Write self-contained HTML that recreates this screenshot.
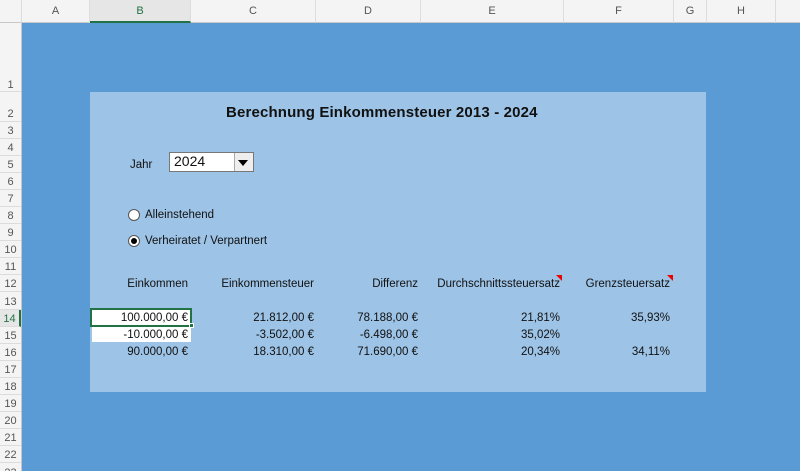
<!DOCTYPE html>
<html><head><meta charset="utf-8"><style>
*{margin:0;padding:0;box-sizing:border-box}
body{width:800px;height:471px;overflow:hidden;background:#5b9bd5;font-family:"Liberation Sans",sans-serif;position:relative;color:#111}
.a{position:absolute;white-space:nowrap}
#colh{position:absolute;left:0;top:0;width:800px;height:23px;background:#f4f4f4;border-bottom:1px solid #c8c8c8}
#rowh{position:absolute;left:0;top:23px;width:22px;height:448px;background:#f4f4f4;border-right:1px solid #c8c8c8;overflow:hidden}
.ch{position:absolute;top:0;height:23px;line-height:23px;text-align:center;font-size:11px;color:#555;border-right:1px solid #dcdcdc}
.rh{position:absolute;left:0;width:21px;text-align:center;font-size:11px;color:#555;border-bottom:1px solid #dcdcdc}
#panel{position:absolute;left:90px;top:92px;width:616px;height:300px;background:#9dc3e6}
.t{font-size:11.5px;position:absolute;white-space:nowrap;line-height:14px}
.r{text-align:right}
.tri{position:absolute;width:0;height:0;border-top:6px solid #e00;border-left:6px solid transparent}
</style></head><body>
<div id="colh">
<div style="position:absolute;left:0;top:0;width:22px;height:23px;border-right:1px solid #dcdcdc"></div>
<div class="ch" style="left:22px;width:68px">A</div>
<div class="ch" style="left:90px;width:101px;color:#217346;background:#e6e6e6;border-bottom:2px solid #217346">B</div>
<div class="ch" style="left:191px;width:125px">C</div>
<div class="ch" style="left:316px;width:105px">D</div>
<div class="ch" style="left:421px;width:143px">E</div>
<div class="ch" style="left:564px;width:110px">F</div>
<div class="ch" style="left:674px;width:33px">G</div>
<div class="ch" style="left:707px;width:69px">H</div>
</div>
<div id="rowh">
<div class="rh" style="top:0;height:69px;line-height:124px">1</div>
<div class="rh" style="top:69px;height:29.5px;line-height:44px">2</div>
<div class="rh" style="top:98.5px;height:17.1px;line-height:19px">3</div>
<div class="rh" style="top:115.6px;height:17.1px;line-height:19px">4</div>
<div class="rh" style="top:132.7px;height:17.1px;line-height:19px">5</div>
<div class="rh" style="top:149.8px;height:17.1px;line-height:19px">6</div>
<div class="rh" style="top:166.9px;height:17.1px;line-height:19px">7</div>
<div class="rh" style="top:184px;height:17.1px;line-height:19px">8</div>
<div class="rh" style="top:201.1px;height:17.1px;line-height:19px">9</div>
<div class="rh" style="top:218.2px;height:17.1px;line-height:19px">10</div>
<div class="rh" style="top:235.3px;height:17.1px;line-height:19px">11</div>
<div class="rh" style="top:252.4px;height:17.1px;line-height:19px">12</div>
<div class="rh" style="top:269.5px;height:17.1px;line-height:19px">13</div>
<div class="rh" style="top:286.6px;height:17.1px;line-height:19px;color:#217346;background:#e6e6e6;border-right:2px solid #217346">14</div>
<div class="rh" style="top:303.7px;height:17.1px;line-height:19px">15</div>
<div class="rh" style="top:320.8px;height:17.1px;line-height:19px">16</div>
<div class="rh" style="top:337.9px;height:17.1px;line-height:19px">17</div>
<div class="rh" style="top:355px;height:17.1px;line-height:19px">18</div>
<div class="rh" style="top:372.1px;height:17.1px;line-height:19px">19</div>
<div class="rh" style="top:389.2px;height:17.1px;line-height:19px">20</div>
<div class="rh" style="top:406.3px;height:17.1px;line-height:19px">21</div>
<div class="rh" style="top:423.4px;height:17.1px;line-height:19px">22</div>
<div class="rh" style="top:440.5px;height:17.1px;line-height:19px">23</div>
</div>
<div id="panel"></div>
<div class="a" style="left:226px;top:104px;font-size:15px;font-weight:bold;letter-spacing:0.15px">Berechnung Einkommensteuer 2013 - 2024</div>
<div class="t" style="left:130px;top:158px">Jahr</div>
<div class="a" style="left:169px;top:152px;width:85px;height:20px;background:#fff;border:1px solid #777"></div>
<div class="a" style="left:174px;top:153px;font-size:14px">2024</div>
<div class="a" style="left:234px;top:153px;width:19px;height:18px;background:#eee;border-left:1px solid #aaa"></div>
<div class="a" style="left:238px;top:160px;width:0;height:0;border-left:5px solid transparent;border-right:5px solid transparent;border-top:6px solid #000"></div>
<div class="a" style="left:128px;top:209px;width:12px;height:12px;border-radius:50%;background:#fff;border:1px solid #555"></div>
<div class="t" style="left:145px;top:208px">Alleinstehend</div>
<div class="a" style="left:128px;top:235px;width:12px;height:12px;border-radius:50%;background:#fff;border:1px solid #555"></div>
<div class="a" style="left:131px;top:238px;width:6px;height:6px;border-radius:50%;background:#000"></div>
<div class="t" style="left:145px;top:234px">Verheiratet / Verpartnert</div>
<div class="t r" style="right:612px;top:277px">Einkommen</div>
<div class="t r" style="right:486px;top:277px">Einkommensteuer</div>
<div class="t r" style="right:382px;top:277px">Differenz</div>
<div class="t r" style="right:240px;top:277px">Durchschnittssteuersatz</div>
<div class="tri" style="left:556px;top:275px"></div>
<div class="t r" style="right:130px;top:277px">Grenzsteuersatz</div>
<div class="tri" style="left:667px;top:275px"></div>
<div class="a" style="left:92px;top:326px;width:99px;height:16px;background:#fff"></div>
<div class="a" style="left:90px;top:308px;width:102px;height:19px;background:#fff;border:2px solid #217346"></div>
<div class="a" style="left:189px;top:323px;width:5px;height:5px;background:#217346;border:1px solid #fff"></div>
<div class="t r" style="right:612px;top:311px">100.000,00 €</div>
<div class="t r" style="right:612px;top:328px">-10.000,00 €</div>
<div class="t r" style="right:612px;top:345px">90.000,00 €</div>
<div class="t r" style="right:486px;top:311px">21.812,00 €</div>
<div class="t r" style="right:486px;top:328px">-3.502,00 €</div>
<div class="t r" style="right:486px;top:345px">18.310,00 €</div>
<div class="t r" style="right:382px;top:311px">78.188,00 €</div>
<div class="t r" style="right:382px;top:328px">-6.498,00 €</div>
<div class="t r" style="right:382px;top:345px">71.690,00 €</div>
<div class="t r" style="right:240px;top:311px">21,81%</div>
<div class="t r" style="right:240px;top:328px">35,02%</div>
<div class="t r" style="right:240px;top:345px">20,34%</div>
<div class="t r" style="right:130px;top:311px">35,93%</div>
<div class="t r" style="right:130px;top:345px">34,11%</div>
</body></html>
